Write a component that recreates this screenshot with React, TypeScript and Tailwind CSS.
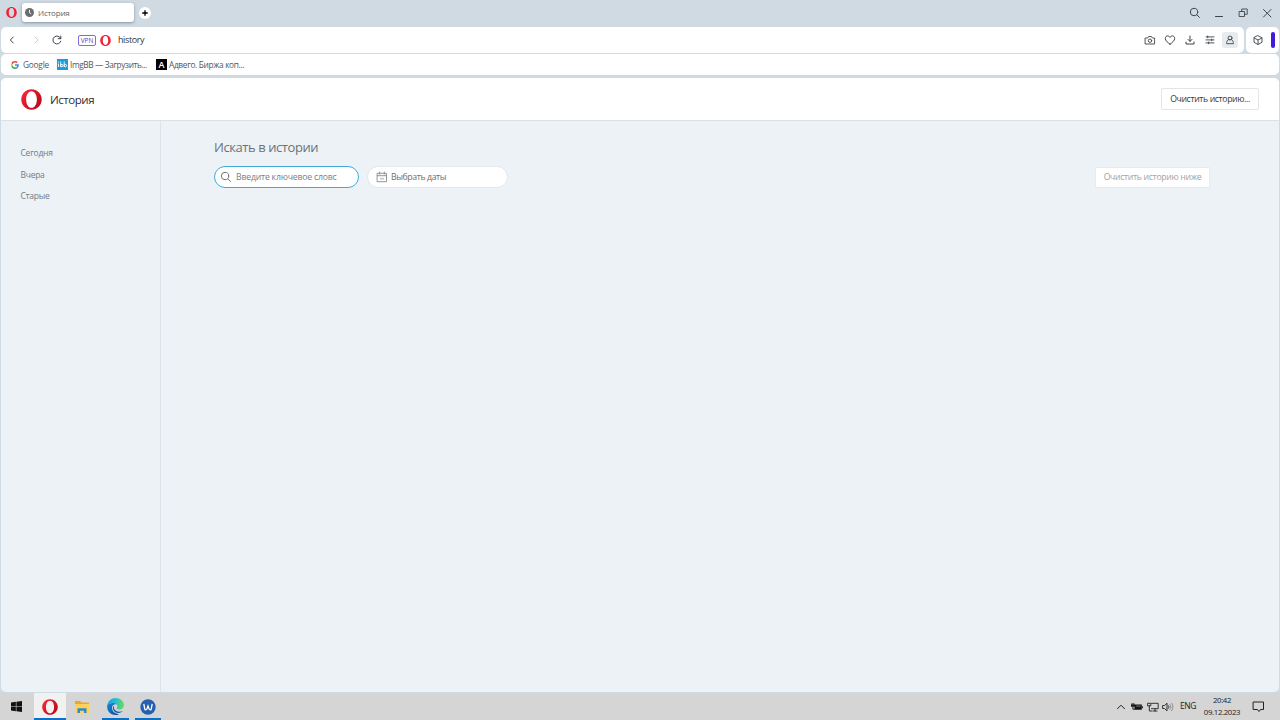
import React from 'react';

interface IconProps {
  className?: string;
}

const OperaIcon: React.FC<IconProps & { id: string }> = ({ className, id }) => (
  <svg className={className} viewBox="0 0 24 24" aria-hidden="true">
    <defs>
      <linearGradient id={id} x1="0" y1="0" x2="1" y2="0.7">
        <stop offset="0" stopColor="#ff2a3b" />
        <stop offset="0.5" stopColor="#dc182b" />
        <stop offset="1" stopColor="#b80c1d" />
      </linearGradient>
    </defs>
    <path
      fill={`url(#${id})`}
      fillRule="evenodd"
      d="M12 0.3C5.6 0.3 0.3 5.5 0.3 12S5.6 23.7 12 23.7 23.7 18.5 23.7 12 18.4 0.3 12 0.3zm0 2.2c3.8 0 6.1 4.3 6.1 9.5s-2.3 9.5-6.1 9.5S5.9 17.2 5.9 12 8.2 2.5 12 2.5z"
    />
  </svg>
);

const OperaFlatIcon: React.FC<IconProps> = ({ className }) => (
  <svg className={className} viewBox="0 0 24 24" aria-hidden="true">
    <path
      fill="#ee2436"
      fillRule="evenodd"
      d="M12 0C5.4 0 0.5 5.4 0.5 12S5.4 24 12 24s11.5-5.4 11.5-12S18.6 0 12 0zm0 2.4c3.8 0 5.9 4.4 5.9 9.6s-2.1 9.6-5.9 9.6S6.1 17.2 6.1 12 8.2 2.4 12 2.4z"
    />
  </svg>
);

const GoogleIcon: React.FC<IconProps> = ({ className }) => (
  <svg className={className} viewBox="0 0 48 48" aria-hidden="true">
    <path fill="#EA4335" d="M24 9.5c3.54 0 6.71 1.22 9.21 3.6l6.85-6.85C35.9 2.38 30.47 0 24 0 14.62 0 6.51 5.38 2.56 13.22l7.98 6.19C12.43 13.72 17.74 9.5 24 9.5z" />
    <path fill="#4285F4" d="M46.98 24.55c0-1.57-.15-3.09-.38-4.55H24v9.02h12.94c-.58 2.96-2.26 5.48-4.78 7.18l7.73 6c4.51-4.18 7.09-10.36 7.09-17.65z" />
    <path fill="#FBBC05" d="M10.53 28.59c-.48-1.45-.76-2.99-.76-4.59s.27-3.14.76-4.59l-7.98-6.19C.92 16.46 0 20.12 0 24s.92 7.54 2.56 10.78l7.97-6.19z" />
    <path fill="#34A853" d="M24 48c6.48 0 11.93-2.13 15.89-5.81l-7.73-6c-2.15 1.45-4.92 2.3-8.16 2.3-6.26 0-11.57-4.22-13.47-9.91l-7.98 6.19C6.51 42.62 14.62 48 24 48z" />
  </svg>
);

interface LineIconProps {
  className?: string;
  viewBox?: string;
  width?: number;
  children: React.ReactNode;
}

const LineIcon: React.FC<LineIconProps> = ({ className, viewBox = '0 0 12 12', width = 1, children }) => (
  <svg
    className={className}
    viewBox={viewBox}
    fill="none"
    stroke="currentColor"
    strokeWidth={width}
    strokeLinecap="round"
    strokeLinejoin="round"
    aria-hidden="true"
  >
    {children}
  </svg>
);

const TitleBar = () => (
  <div className="flex h-[27px] items-start">
    <OperaFlatIcon className="mt-[7px] ml-[5px] h-[11px] w-[11px]" />
    <div className="mt-[3px] ml-[5px] flex h-[19px] w-[112px] items-center rounded-[3px] bg-white pl-[3px] shadow-[0_1px_3px_rgba(60,75,90,0.5)]">
      <svg className="h-[9px] w-[9px]" viewBox="0 0 9 9" aria-hidden="true">
        <circle cx="4.5" cy="4.5" r="4.5" fill="#6b6d70" />
        <path d="M4.5 1.8v2.9l1.7 1.1" fill="none" stroke="#fff" strokeWidth="0.9" />
      </svg>
      <span className="ml-1 text-[8px] tracking-[-0.2px] text-[#5f6367]">История</span>
    </div>
    <div className="mt-[7px] ml-[5px] flex h-3 w-3 items-center justify-center rounded-full bg-white text-black">
      <LineIcon className="h-3 w-3" width={1.3}>
        <path d="M6 3.7v4.6M3.7 6h4.6" />
      </LineIcon>
    </div>
    <div className="mt-[7px] mr-[6px] ml-auto flex items-center gap-3 text-[#3d444b]">
      <LineIcon className="h-3 w-3">
        <circle cx="5" cy="5" r="3.7" />
        <path d="M7.7 7.7l2.7 2.7" />
      </LineIcon>
      <LineIcon className="h-3 w-3">
        <path d="M2.5 9.5h7" />
      </LineIcon>
      <LineIcon className="h-3 w-3" width={0.9}>
        <path d="M2.5 4.5h5v5h-5zM4.7 4.5V2h5.500v5.300H7.700" />
      </LineIcon>
      <LineIcon className="h-3 w-3">
        <path d="M2.5 2.500l7.500 7.500M10 2.500L2.500 10" />
      </LineIcon>
    </div>
  </div>
);

const AddressBar = () => (
  <div className="flex h-[26px] gap-[2px]">
    <div className="flex flex-1 items-center rounded-[5px] bg-white text-[#3d444b]">
      <LineIcon className="ml-[5px] h-3 w-3">
        <path d="M7.3 3L4.3 6l3 3" />
      </LineIcon>
      <LineIcon className="ml-3 h-3 w-3 text-[#c9ced3]">
        <path d="M5 3l3 3-3 3" />
      </LineIcon>
      <LineIcon className="ml-[9px] h-3 w-3">
        <path d="M9.7 4.5A4 4 0 1 0 9.8 7.2M9.8 2v2.7H7.2" />
      </LineIcon>
      <span className="ml-[15px] flex h-[11px] w-[18px] items-center justify-center rounded-[2px] border border-[#7f6bdc] pt-px text-[6.5px] tracking-[-0.1px] text-[#5a40c8]">
        VPN
      </span>
      <OperaFlatIcon className="ml-1 h-[11px] w-[11px]" />
      <span className="ml-[7px] text-[9px] tracking-[-0.4px] text-[#333]">history</span>
      <div className="mr-[6px] ml-auto flex items-center">
        <LineIcon className="mr-2 h-3 w-3" width={0.9}>
          <path d="M1.5 4h2.2l1-1.5h2.7l1 1.5h2.2v6h-9.1z" />
          <circle cx="6" cy="6.7" r="1.7" />
        </LineIcon>
        <LineIcon className="mr-2 h-3 w-3">
          <path d="M6 10.2C3.5 8.4 1.3 6.6 1.3 4.4c0-2.8 3.4-3.4 4.7-1 1.3-2.4 4.7-1.8 4.7 1C10.7 6.6 8.5 8.4 6 10.2z" />
        </LineIcon>
        <LineIcon className="mr-2 h-3 w-3">
          <path d="M6 2v5.2M4 5.4l2 2 2-2M2 8v2h8V8" />
        </LineIcon>
        <LineIcon className="mr-[6px] h-3 w-3" width={0.9}>
          <path d="M2 2.9h8M2 5.9h8M2 8.9h8M3.7 2v1.8M7.7 5v1.8M4.7 8v1.8" />
        </LineIcon>
        <span className="flex h-4 w-4 items-center justify-center rounded-[3px] bg-[#e6ebf0]">
          <LineIcon className="h-3 w-3" width={0.9}>
            <circle cx="6" cy="4" r="2" />
            <path d="M4.3 5.7C3 6.3 2.5 8 2.7 9.7h6.6C9.5 8 9 6.3 7.7 5.7z" />
          </LineIcon>
        </span>
      </div>
    </div>
    <div className="flex w-[33px] items-center rounded-[5px] bg-white text-[#3d444b]">
      <LineIcon className="ml-[6px] h-3 w-3" width={0.9}>
        <path d="M6 1.7l4 2.1v4.5l-4 2.2-4-2.2V3.8zM2.2 4L6 6l3.8-2M6 6v4.3" />
      </LineIcon>
      <span className="ml-[7px] h-4 w-1 rounded-[2px] bg-[#4319e0]" />
    </div>
  </div>
);

const BookmarksBar = () => (
  <div className="mt-px flex h-[21px] items-center rounded-[5px] bg-white text-[8.3px] leading-3 whitespace-nowrap text-[#50565c]">
    <GoogleIcon className="ml-[10px] h-2 w-2" />
    <span className="ml-1 w-[26px] pt-px tracking-[-0.22px]">Google</span>
    <svg className="ml-2 h-[11px] w-[11px]" viewBox="0 0 11 11" aria-hidden="true">
      <rect width="11" height="11" fill="#1a9bdc" />
      <path d="M1.5 4.5V8M1.5 2.5v1M3.7 2.5V8M7.2 2.5V8" stroke="#fff" strokeWidth="0.9" />
      <circle cx="4.9" cy="6.6" r="1.2" fill="none" stroke="#fff" strokeWidth="0.9" />
      <circle cx="8.4" cy="6.6" r="1.2" fill="none" stroke="#fff" strokeWidth="0.9" />
    </svg>
    <span className="ml-[2px] w-[78px] pt-px tracking-[-0.39px]">ImgBB — Загрузить...</span>
    <span className="ml-2 flex h-[11px] w-[11px] items-center justify-center bg-black text-[9px] font-semibold text-white">
      A
    </span>
    <span className="ml-[2px] pt-px tracking-[-0.32px]">Адвего. Биржа коп...</span>
  </div>
);

const periods = ['Сегодня', 'Вчера', 'Старые'];

const HistoryPage = () => (
  <div className="mt-[3px] flex h-[614px] flex-col overflow-hidden rounded-[5px] bg-[#edf2f7]">
    <header className="flex h-[43px] items-center border-b border-[#d8e1e8] bg-white">
      <OperaIcon id="opera-header" className="ml-5 h-[21px] w-[21px]" />
      <h1 className="ml-2 pt-[2px] text-[11.5px] tracking-[-0.45px] text-[#2d2d33]">История</h1>
      <button className="mr-5 ml-auto h-[22px] w-[98px] rounded-[2px] border border-[#e0e5ea] bg-white pt-[2px] text-[8.7px] tracking-[-0.37px] whitespace-nowrap text-[#38383c]">
        Очистить историю...
      </button>
    </header>
    <div className="flex flex-1">
      <nav className="flex w-[160px] flex-col border-r border-[#dce4ea] pt-[22px] pl-[19.5px] text-[8.5px] tracking-[-0.25px] text-[#757c81]">
        {periods.map((period) => (
          <span key={period} className="flex h-[21.3px] items-center">
            {period}
          </span>
        ))}
      </nav>
      <main className="flex-1 pt-[17px] pl-[53px]">
        <h2 className="h-[19px] text-[13px] leading-[19px] tracking-[-0.43px] text-[#6c7277]">Искать в истории</h2>
        <div className="mt-[9px] mr-[69px] flex items-center">
          <div className="flex h-[22px] w-[145px] items-center rounded-full border border-[#42a9d9] bg-white pl-[5px]">
            <LineIcon className="h-3 w-3 text-[#6f757a]">
              <circle cx="5" cy="5" r="3.7" />
              <path d="M7.8 7.8l2.7 2.7" />
            </LineIcon>
            <span className="ml-[4px] w-[101px] overflow-hidden pt-[2px] text-[8.7px] tracking-[-0.2px] whitespace-nowrap text-[#7b8084]">
              Введите ключевое словс
            </span>
          </div>
          <div className="ml-2 flex h-[22px] w-[141px] items-center rounded-full border border-[#e2e8ed] bg-white pl-2">
            <LineIcon className="h-3 w-3 text-[#858a8e]" width={0.9}>
              <path d="M1.5 2.3h9v8.4h-9zM1.5 4.7h9M3.7 1v2.2M8.3 1v2.2M5 7.2v1M7 7.2v1" />
            </LineIcon>
            <span className="ml-[3px] pt-[2px] text-[8.7px] tracking-[-0.38px] text-[#6c7074]">Выбрать даты</span>
          </div>
          <button className="ml-auto h-[21px] w-[115px] border border-[#e6ebef] bg-white pt-px text-[8.7px] tracking-[-0.32px] whitespace-nowrap text-[#a0a3a5]">
            Очистить историю ниже
          </button>
        </div>
      </main>
    </div>
  </div>
);

const FolderIcon = () => (
  <svg className="h-[14px] w-4" viewBox="0 0 16 14" aria-hidden="true">
    <path d="M1 1h5l1.5 1.5H15V13H1z" fill="#e9a928" />
    <path d="M1 4h14v9H1z" fill="#ffd257" />
    <path d="M3.5 13V8.2h9V13H10v-2.3H6V13z" fill="#3188cd" />
  </svg>
);

const EdgeIcon = () => (
  <svg className="h-[17px] w-[17px]" viewBox="0 0 24 24" aria-hidden="true">
    <defs>
      <linearGradient id="edge-top" x1="0" y1="0.3" x2="1" y2="0.4">
        <stop offset="0" stopColor="#1d9ee2" />
        <stop offset="0.5" stopColor="#27bfd0" />
        <stop offset="1" stopColor="#6cdc55" />
      </linearGradient>
      <linearGradient id="edge-bottom" x1="0" y1="0" x2="1" y2="1">
        <stop offset="0" stopColor="#1684d8" />
        <stop offset="1" stopColor="#104c9c" />
      </linearGradient>
    </defs>
    <path d="M0.3 11C1 4.5 6 0 12 0c7 0 12 5 12 10.3 0 4-3 6-6.3 6-2.7 0-4.2-.9-4.2-1.8 0-.7 1.1-1.1 1.1-3C14.6 8.5 11.5 7 8.5 7 4.3 7 1.1 9 .3 11z" fill="url(#edge-top)" />
    <path d="M0.3 10.8C1.3 8.5 4.5 7 8.5 7c2.3 0 4.2.8 5.2 2-4-.7-6.7 1.5-6.7 4.9 0 5.5 5 9 10.2 8.9C15.5 23.6 13.9 24 12 24 5.3 24-.6 18.7.3 10.8z" fill="url(#edge-bottom)" />
    <path d="M10 11c-1.5 1-2 2.5-1.7 4.3.7 4.1 4.5 6.3 8.3 5.9 2.5-.3 4.2-1.4 5.7-2.8-3.3 1.6-7.5 1.4-10.1-.6C9.9 16.1 9 13.5 10 11z" fill="#175ca9" />
  </svg>
);

const Taskbar = () => (
  <div className="flex h-[27px] bg-[#d5d5d6]">
    <div className="flex w-[34px] items-center justify-center pr-[2px]">
      <svg className="h-[11px] w-[11px]" viewBox="0 0 12 12" aria-hidden="true">
        <path d="M0 1.7l5.3-.8v4.8H0zM5.9.8L12 0v5.7H5.9zM0 6.3h5.3v4.8L0 10.3zM5.9 6.3H12V12l-6.1-.8z" fill="#111" />
      </svg>
    </div>
    <div className="flex w-8 items-center justify-center border-b-2 border-[#0b70c9] bg-[#f1f1f1] pt-[2px]">
      <OperaIcon id="opera-task" className="h-4 w-4" />
    </div>
    <div className="flex w-8 items-center justify-center">
      <FolderIcon />
    </div>
    <div className="ml-1 flex w-[27px] items-center justify-center border-b-2 border-[#0b70c9] pt-[2px] pr-px">
      <EdgeIcon />
    </div>
    <div className="ml-[6px] flex w-[26px] items-center justify-center border-b-2 border-[#0b70c9] pt-[2px]">
      <svg className="h-4 w-4" viewBox="0 0 15 15" aria-hidden="true">
        <circle cx="7.5" cy="7.5" r="7.2" fill="#265fae" />
        <path d="M3.6 4.6l.8 4.7c.2 1.3 1.7 1.3 2.1 0L7.5 6.5l1 2.8c.4 1.3 1.9 1.3 2.1 0l.8-4.7" fill="none" stroke="#fff" strokeWidth="1.2" />
      </svg>
    </div>
    <div className="ml-auto flex items-center text-[#222]">
      <LineIcon className="h-3 w-[10px]" viewBox="0 0 10 12">
        <path d="M1.5 7.7L5 4.2l3.5 3.5" />
      </LineIcon>
      <svg className="ml-[5px] h-[10px] w-3" viewBox="0 0 12 10" aria-hidden="true">
        <path d="M3.5 2.5h7.3v5.2H3.5zM11 4.2h.9v2H11zM0 2.2h3.8v2.6H0z" fill="#161616" />
        <path d="M1 1v1.2M2.9 1v1.2M1.9 4.8v2.4h2" fill="none" stroke="#161616" strokeWidth="0.9" />
        <path d="M5.2 4.1h4.3" stroke="#bbb" strokeWidth="0.6" />
      </svg>
      <LineIcon className="ml-1 h-3 w-3" width={0.9}>
        <path d="M4.5 2.3h6.7v5.4H4.5M6 10h4M8 7.7V10M0.8 2.3h3v2.5h-3zM2.3 4.8v5.2h2.5" />
      </LineIcon>
      <LineIcon className="ml-[3px] h-3 w-3" width={0.9}>
        <path d="M1 4.5h1.5L5 2.2v7.6L2.5 7.5H1zM6.5 4.7c.6.8.6 1.8 0 2.6" />
        <path d="M8 3.4c1.2 1.5 1.2 3.7 0 5.2M9.6 2.2c1.8 2.2 1.8 5.4 0 7.6" stroke="#888" />
      </LineIcon>
      <span className="ml-[6px] w-[16px] text-[8.5px] tracking-[-0.4px]">ENG</span>
      <div className="-mt-px ml-[6px] flex w-10 flex-col items-center text-[7.8px] leading-3 tracking-[-0.35px]">
        <span>20:42</span>
        <span>09.12.2023</span>
      </div>
      <LineIcon className="mr-[15px] ml-[10px] h-[13px] w-[13px]" viewBox="0 0 13 13">
        <path d="M1.5 2h10v7.5H8.5l-1.5 2-1.5-2h-4z" />
      </LineIcon>
    </div>
  </div>
);

const App: React.FC = () => {
  return (
    <div className="flex h-[720px] w-[1280px] flex-col overflow-hidden bg-[#d0dae3] font-['Open_Sans','Noto_Sans',sans-serif]">
      <div className="flex h-[693px] flex-col px-px">
        <TitleBar />
        <AddressBar />
        <BookmarksBar />
        <HistoryPage />
      </div>
      <Taskbar />
    </div>
  );
};

export default App;
